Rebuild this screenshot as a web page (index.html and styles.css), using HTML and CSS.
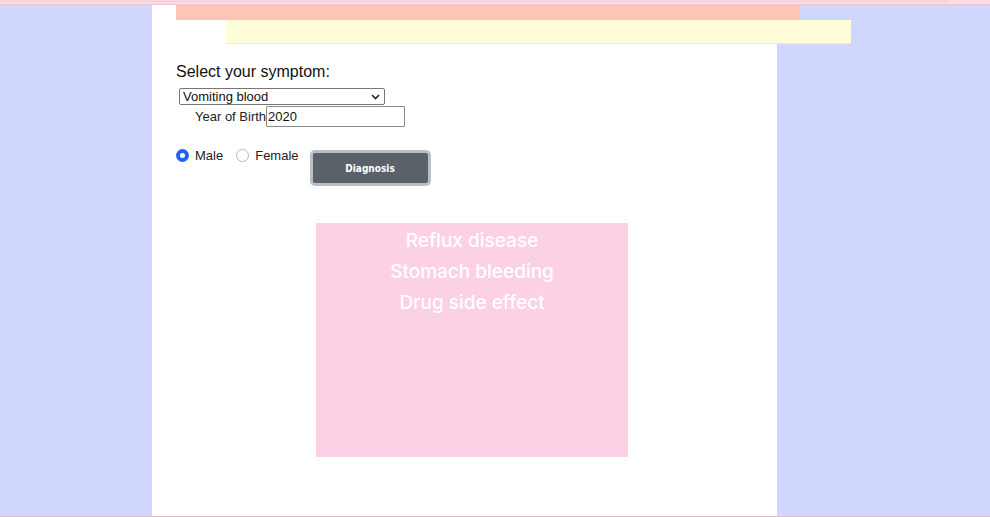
FILE: index.html
```html
<!DOCTYPE html>
<html>
<head>
<meta charset="utf-8">
<link rel="stylesheet" href="styles.css">
</head>
<body>
<div class="topstrip"><div class="topshadow"></div></div>
<div class="page">
  <main class="column">
    <div class="bar bar-salmon"></div>
    <div class="bar bar-yellow"></div>
    <section class="form">
      <h2 class="title">Select your symptom:</h2>
      <select class="symptom">
        <option>Vomiting blood</option>
      </select>
      <div class="yob-row">
        <label class="yob-label">Year of Birth</label><input class="yob" type="text" value="2020">
      </div>
      <div class="gender-row">
        <label class="radio"><span class="dot checked"></span>Male</label>
        <label class="radio"><span class="dot"></span>Female</label>
        <button class="diag">Diagnosis</button>
      </div>
    </section>
    <div class="results">
      <div class="result">Reflux disease</div>
      <div class="result">Stomach bleeding</div>
      <div class="result">Drug side effect</div>
    </div>
  </main>
</div>
<div class="bottomline"></div>
</body>
</html>
```
FILE: styles.css
```css
html, body {
  margin: 0;
  padding: 0;
  height: 517px;
  overflow: hidden;
}
body {
  background: #d0d6fe;
  font-family: "Liberation Sans", Arial, sans-serif;
  display: flex;
  flex-direction: column;
}
.topstrip {
  height: 4px;
  background: #fddde3;
  border-bottom: 1px solid #ecc7d2;
  position: relative;
}
.topshadow {
  height: 2px;
  width: 948px;
  background: linear-gradient(#fddde3, #e8c9d2);
  border-radius: 0 0 2px 0;
}
.page {
  flex: 1;
  display: flex;
  min-height: 0;
}
.column {
  margin-left: 152px;
  width: 625px;
  background: #fff;
  display: flex;
  flex-direction: column;
}
.bar {
  flex: none;
}
.bar-salmon {
  margin-left: 24px;
  width: 624px;
  height: 15px;
  background: #ffc4b8;
}
.bar-yellow {
  margin-left: 74px;
  width: 625px;
  height: 23px;
  background: #fffdd8;
  box-shadow: 0 1px 0 #ecebd8;
}
.form {
  padding-left: 24px;
  padding-top: 19px;
}
.title {
  margin: 0;
  font-size: 16px;
  font-weight: normal;
  line-height: 20px;
  color: #111;
}
.symptom {
  margin: 6px 0 0 3px;
  width: 206px;
  height: 17px;
  font-family: "Liberation Sans", Arial, sans-serif;
  font-size: 13px;
  line-height: 15px;
  padding: 0 0 0 3px;
  border: 1px solid #767676;
  border-radius: 2px;
  background: #fff url("data:image/svg+xml;utf8,<svg xmlns='http://www.w3.org/2000/svg' width='9' height='6' viewBox='0 0 9 6'><path d='M1 1l3.5 3.5L8 1' fill='none' stroke='%23222' stroke-width='1.6'/></svg>") no-repeat right 4px center;
  -webkit-appearance: none;
  appearance: none;
  color: #111;
  display: block;
}
.yob-row {
  display: flex;
  align-items: center;
  margin-top: 1px;
  padding-left: 19px;
}
.yob-label {
  font-size: 13px;
  color: #222;
}
.yob {
  width: 139px;
  height: 21px;
  box-sizing: border-box;
  border: 1px solid #8a8a8a;
  border-radius: 1px;
  padding: 0 1px;
  font-family: "Liberation Sans", Arial, sans-serif;
  font-size: 13px;
  color: #111;
  margin: 0;
}
.gender-row {
  display: flex;
  align-items: flex-start;
  margin-top: 21px;
}
.radio {
  display: flex;
  align-items: center;
  height: 15px;
  font-size: 13px;
  color: #222;
  margin-right: 13px;
}
.dot {
  width: 13px;
  height: 13px;
  box-sizing: border-box;
  border-radius: 50%;
  border: 1px solid #b8b8b8;
  background: #fff;
  margin-right: 6px;
}
.dot.checked {
  border: 4px solid #1f64f5;
}
.diag {
  margin: 2px 0 0 -2px;
  width: 121px;
  height: 36px;
  box-sizing: border-box;
  background: #5a6168;
  border: 3px solid #b8bfc6;
  border-radius: 5px;
  color: #fff;
  font-family: "DejaVu Sans Condensed", "DejaVu Sans", sans-serif;
  font-weight: bold;
  font-size: 10px;
  padding: 0;
}
.results {
  margin: 37px 0 0 164px;
  width: 312px;
  height: 234px;
  background: #fdd1e5;
  text-align: center;
  padding-top: 2px;
  box-sizing: border-box;
}
.result {
  color: #fff;
  font-family: Inter, "Liberation Sans", sans-serif;
  font-weight: 500;
  font-size: 19px;
  line-height: 31px;
}
.bottomline {
  height: 1px;
  background: #dcc1ca;
}
```
